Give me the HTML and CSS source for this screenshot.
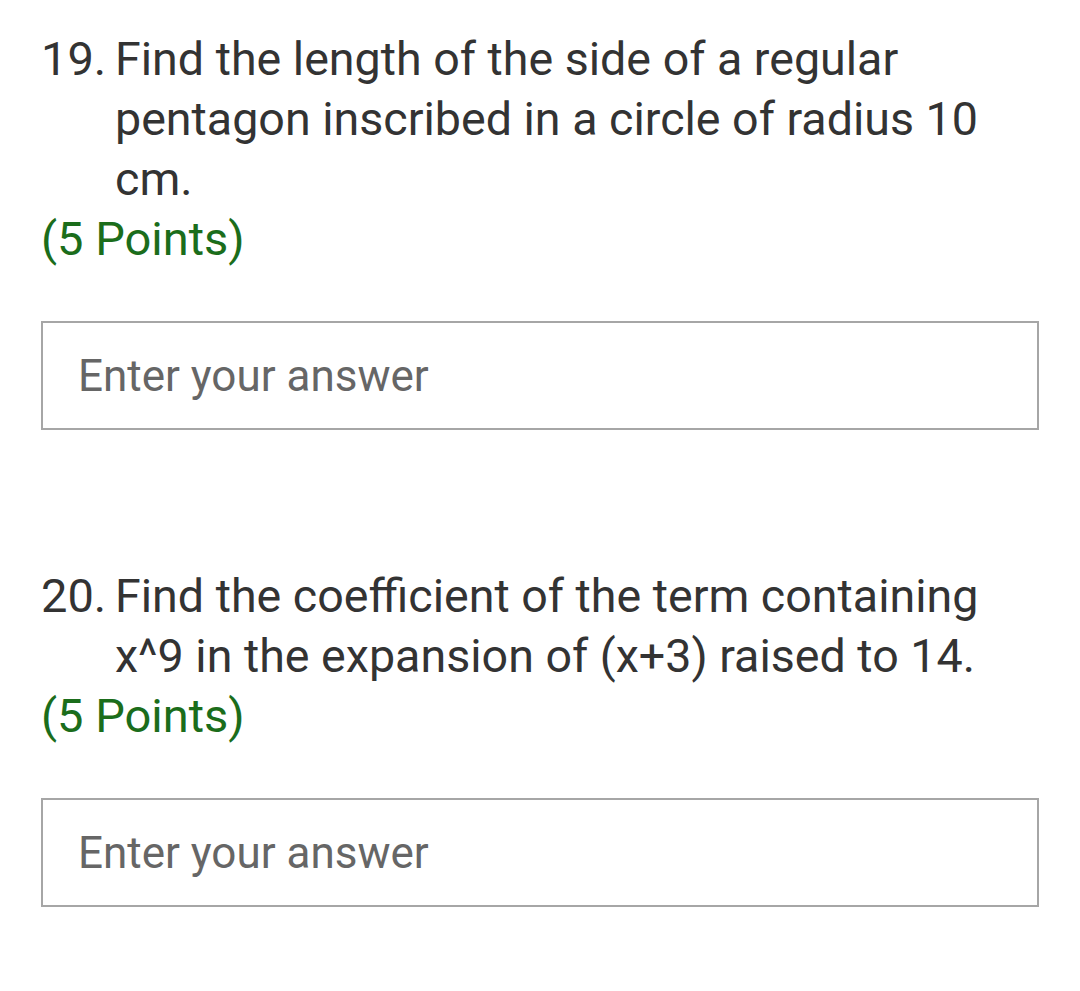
FILE: index.html
```html
<!DOCTYPE html>
<html>
<head>
<meta charset="utf-8">
<link rel="stylesheet" href="styles.css">
</head>
<body>
<main class="form">
  <section class="question">
    <div class="title">
      <span class="num">19.</span>
      <span class="text">Find the length of the side of a regular pentagon inscribed in a circle of radius 10 cm.</span>
    </div>
    <div class="points">(5 Points)</div>
    <div class="answer"><span class="placeholder">Enter your answer</span></div>
  </section>
  <section class="question">
    <div class="title">
      <span class="num">20.</span>
      <span class="text">Find the coefficient of the term containing x^9 in the expansion of (x+3) raised to 14.</span>
    </div>
    <div class="points">(5 Points)</div>
    <div class="answer"><span class="placeholder">Enter your answer</span></div>
  </section>
</main>
</body>
</html>
```

FILE: styles.css
```css
html, body {
  margin: 0;
  padding: 0;
  background: #ffffff;
}
body {
  font-family: Roboto, "Noto Sans", sans-serif;
  font-size: 47px;
  line-height: 60px;
  color: #333333;
}
.form {
  padding: 29px 41px 0 41px;
  display: flex;
  flex-direction: column;
  gap: 136px;
}
.question {
  display: flex;
  flex-direction: column;
}
.title {
  display: flex;
}
.num {
  flex: 0 0 74px;
}
.text {
  flex: 1;
  font-size: 46.6px;
  padding-right: 20px;
}
.points {
  color: #1b6d1b;
}
.answer {
  margin-top: 52px;
  height: 105px;
  border: 2px solid #a6a6a6;
  display: flex;
  align-items: center;
  padding-left: 35px;
}
.placeholder {
  font-size: 44px;
  color: #666666;
}
```
